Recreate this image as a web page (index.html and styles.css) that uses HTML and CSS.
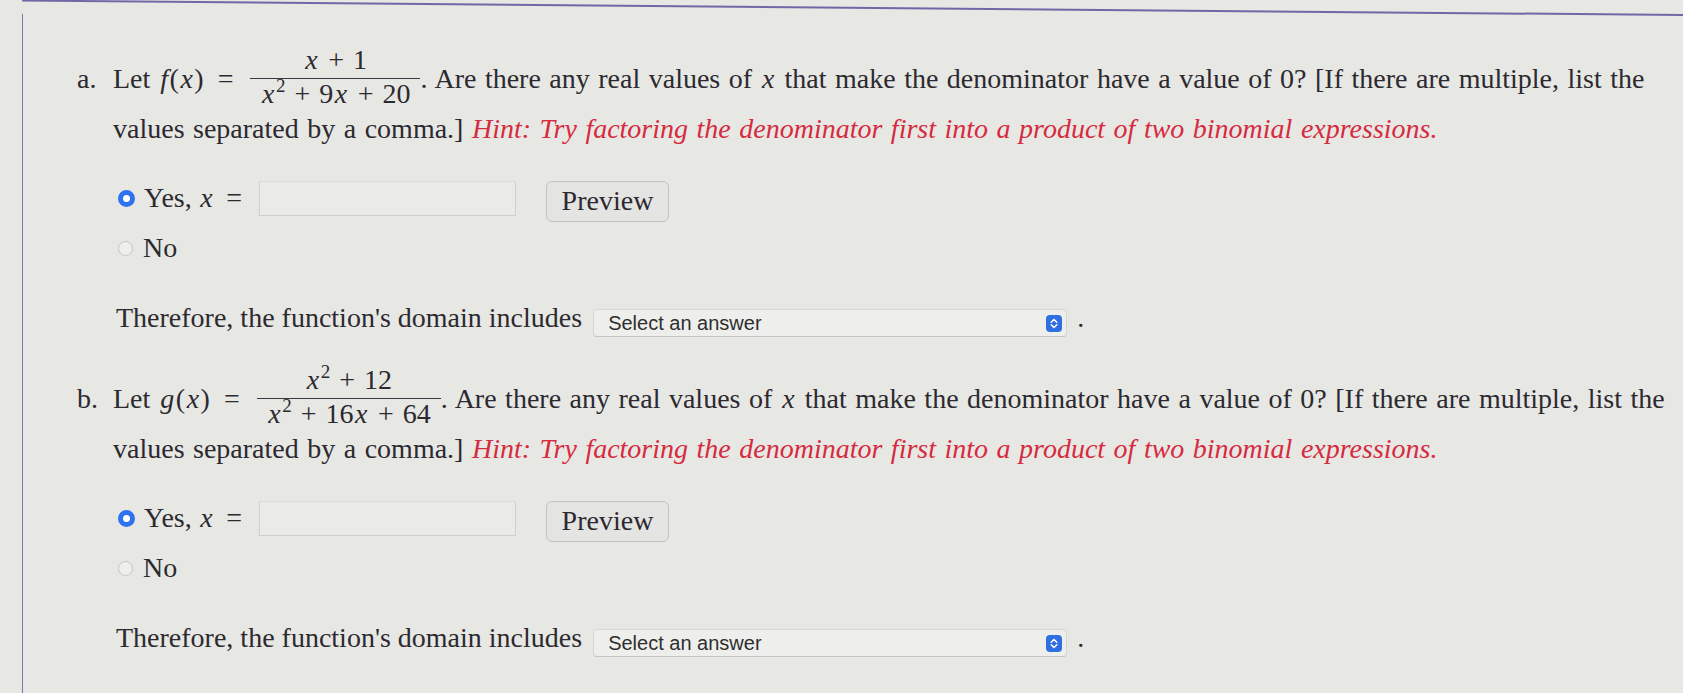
FILE: index.html
```html
<!DOCTYPE html>
<html lang="en">
<head>
    <meta charset="UTF-8">
    <meta name="viewport" content="width=device-width, initial-scale=1.0">
    <title>Domain of rational functions</title>
    <link rel="stylesheet" href="styles.css">
</head>
<body>
    <div class="sheet">
        <div class="top-rule"></div>

        <!-- part a -->
        <div class="part part-a">
            <div class="part-label">a.</div>
            <div class="part-body">
                <p class="question">Let <span class="mi">f</span>(<span class="mi">x</span>)<span class="eq">=</span><span class="frac"><span class="num"><span class="mi">x</span><span class="op">+</span>1</span><span class="den"><span class="mi">x</span><sup>2</sup><span class="op">+</span>9<span class="mi">x</span><span class="op">+</span>20</span></span>. Are there any real values of <span class="mi">x</span> that make the denominator have a value of 0? [If there are multiple, list the values separated by a comma.] <em class="hint">Hint: Try factoring the denominator first into a product of two binomial expressions.</em></p>
                <div class="choices">
                    <div class="choice">
                        <span class="radio checked"></span>
                        <span class="choice-text">Yes, <span class="mi">x</span><span class="eq">=</span></span>
                        <input class="answer" type="text">
                        <button class="preview" type="button">Preview</button>
                    </div>
                    <div class="choice">
                        <span class="radio"></span>
                        <span class="choice-text">No</span>
                    </div>
                </div>
                <p class="domain">Therefore, the function's domain includes <span class="select">Select an answer<span class="select-arrow"><svg width="8" height="11" viewBox="0 0 8 11"><path d="M1.2 4.2 L4 1.5 L6.8 4.2 M1.2 6.8 L4 9.5 L6.8 6.8" fill="none" stroke="#fff" stroke-width="1.5" stroke-linecap="round" stroke-linejoin="round"/></svg></span></span><span class="dot">.</span></p>
            </div>
        </div>

        <!-- part b -->
        <div class="part part-b">
            <div class="part-label">b.</div>
            <div class="part-body">
                <p class="question">Let <span class="mi">g</span>(<span class="mi">x</span>)<span class="eq">=</span><span class="frac"><span class="num"><span class="mi">x</span><sup>2</sup><span class="op">+</span>12</span><span class="den"><span class="mi">x</span><sup>2</sup><span class="op">+</span>16<span class="mi">x</span><span class="op">+</span>64</span></span>. Are there any real values of <span class="mi">x</span> that make the denominator have a value of 0? [If there are multiple, list the values separated by a comma.] <em class="hint">Hint: Try factoring the denominator first into a product of two binomial expressions.</em></p>
                <div class="choices">
                    <div class="choice">
                        <span class="radio checked"></span>
                        <span class="choice-text">Yes, <span class="mi">x</span><span class="eq">=</span></span>
                        <input class="answer" type="text">
                        <button class="preview" type="button">Preview</button>
                    </div>
                    <div class="choice">
                        <span class="radio"></span>
                        <span class="choice-text">No</span>
                    </div>
                </div>
                <p class="domain">Therefore, the function's domain includes <span class="select">Select an answer<span class="select-arrow"><svg width="8" height="11" viewBox="0 0 8 11"><path d="M1.2 4.2 L4 1.5 L6.8 4.2 M1.2 6.8 L4 9.5 L6.8 6.8" fill="none" stroke="#fff" stroke-width="1.5" stroke-linecap="round" stroke-linejoin="round"/></svg></span></span><span class="dot">.</span></p>
            </div>
        </div>
    </div>
</body>
</html>
```

FILE: styles.css
```css
body {
    margin: 0;
    padding: 0;
    background-color: #e7e7e4;
    font-family: "Liberation Serif", "Times New Roman", serif;
    font-size: 28px;
    color: #2c2a30;
    overflow: hidden;
}

/* page frame, left rule of the question panel */
.sheet {
    margin-left: 22px;
    border-left: 1px solid #7d76ae;
    min-height: 693px;
    padding-left: 54px;
    padding-right: 18px;
}

/* thin slanted rule across the top */
.top-rule {
    height: 2px;
    margin-left: -55px;
    margin-right: -18px;
    margin-top: 14px;
    background-color: #6f68a6;
    transform-origin: right center;
    transform: rotate(0.5deg);
}

.part {
    display: flex;
    align-items: baseline;
}

.part-a {
    margin-top: 28px;
}

.part-b {
    margin-top: 26px;
}

.part-label {
    width: 36px;
    flex-shrink: 0;
}

.part-body {
    flex: 1;
}

.question {
    margin: 0;
    line-height: 40px;
    word-spacing: 1.5px;
}

/* math bits */
.mi {
    font-style: italic;
    padding: 0 1.5px;
}

.eq {
    margin: 0 14px;
}

.op {
    margin: 0 9px;
}

sup {
    font-size: 19px;
    line-height: 0;
    vertical-align: 11px;
}

/* stacked fraction */
.frac {
    display: inline-flex;
    flex-direction: column;
    vertical-align: 19px;
    text-align: center;
    line-height: 32px;
    margin-left: 3px;
    word-spacing: 0;
}

.num {
    border-bottom: 1.5px solid #3a3840;
    padding: 0 10px 2px;
}

.den {
    padding: 0 10px;
    line-height: 30px;
}

.hint {
    color: #d62b3f;
}

/* answer choices */
.choices {
    margin-top: 24px;
    padding-left: 5px;
}

.choice {
    display: flex;
    align-items: center;
    height: 50px;
}

.radio {
    width: 15px;
    height: 15px;
    border-radius: 50%;
    border: 1px solid #c4c4c4;
    background-color: #efefed;
    box-sizing: border-box;
    margin-right: 10px;
}

.radio.checked {
    width: 17px;
    height: 17px;
    border: 5px solid #2f72f0;
    background-color: #ffffff;
    margin-right: 9px;
}

.choice-text .eq {
    margin: 0 12px;
}

.answer {
    width: 257px;
    height: 35px;
    margin-left: 5px;
    box-sizing: border-box;
    border: 1px solid #cfcfcd;
    border-top-color: #dcdcda;
    background-color: #eaeae8;
}

.preview {
    margin-left: 30px;
    margin-top: 6px;
    width: 123px;
    height: 41px;
    font-family: "Liberation Serif", "Times New Roman", serif;
    font-size: 28px;
    color: #2c2a30;
    background-color: #e4e4e2;
    border: 1.5px solid #c2c2c0;
    border-radius: 6px;
    padding: 0;
}

/* domain sentence with select */
.domain {
    margin: 25px 0 0 3px;
    line-height: 40px;
}

.select {
    display: inline-flex;
    align-items: center;
    justify-content: space-between;
    width: 474px;
    height: 28px;
    box-sizing: border-box;
    padding: 0 4px 0 14px;
    margin-left: 4px;
    vertical-align: -3px;
    font-family: "Liberation Sans", Arial, sans-serif;
    font-size: 20px;
    line-height: 28px;
    color: #2e2e2e;
    background-color: #eeeeec;
    border: 1px solid #d6d6d4;
    border-bottom-color: #c4c4c2;
    border-radius: 4px;
}

.select-arrow {
    display: flex;
    align-items: center;
    justify-content: center;
    width: 16px;
    height: 17px;
    border-radius: 4px;
    background-color: #2e6fe2;
}

.dot {
    margin-left: 10px;
}
```
